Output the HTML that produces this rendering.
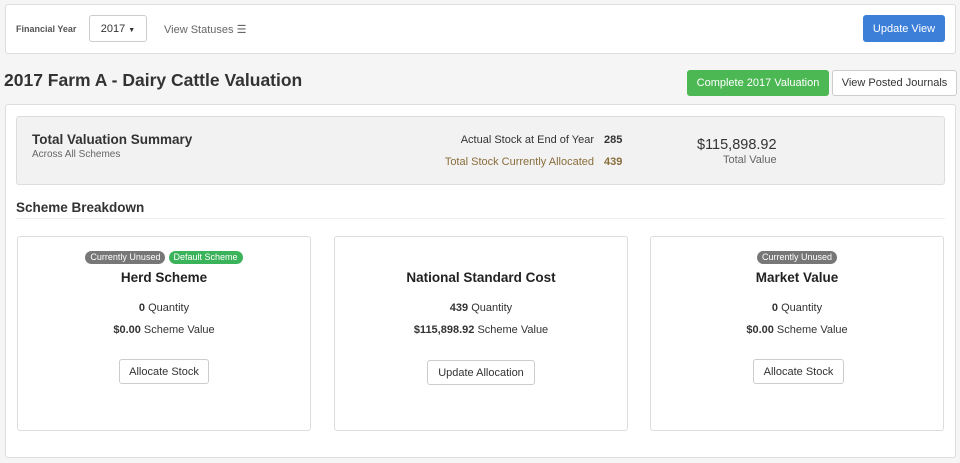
<!DOCTYPE html>
<html><head><style>
*{box-sizing:border-box;margin:0;padding:0}
body{width:960px;height:463px;background:#f5f5f5;font-family:"Liberation Sans",Arial,sans-serif;color:#333;position:relative;overflow:hidden;font-size:11px}
.a{position:absolute}
.panel{background:#fff;border:1px solid #ddd;border-radius:3px}
.btn{position:absolute;border:1px solid #ccc;border-radius:3px;background:#fff;font-size:11px;text-align:center}
.card{position:absolute;top:236px;width:294px;height:195px;border:1px solid #ddd;border-radius:3px;background:#fff;text-align:center}
.card h3{position:absolute;left:0;right:0;top:33px;font-size:13.5px;font-weight:bold;color:#222}
.card .q{position:absolute;left:0;right:0;top:65px}
.card .v{position:absolute;left:0;right:0;top:87px}
.badge{display:inline-block;color:#fff;font-size:9px;border-radius:7px;padding:1px 5px;line-height:11px}
</style></head><body>
<div class="a panel" style="left:5px;top:4px;width:951px;height:50px"></div>
<div class="a" style="left:16px;top:24px;font-size:9px;font-weight:bold;color:#555">Financial Year</div>
<div class="btn" style="left:89px;top:15px;width:58px;height:27px;line-height:27px;font-size:11px">2017 <span style="font-size:7px">▼</span></div>
<div class="a" style="left:164px;top:23px;color:#666">View Statuses <span style="font-size:11px">☰</span></div>
<div class="a" style="left:863px;top:15px;width:82px;height:27px;background:#3c7fd8;border-radius:3px;color:#fff;line-height:28px;text-align:center">Update View</div>
<div class="a" style="left:4px;top:70px;font-size:17.5px;font-weight:bold;color:#333">2017 Farm A - Dairy Cattle Valuation</div>
<div class="a" style="left:687px;top:70px;width:142px;height:26px;background:#4cb854;border-radius:3px;color:#fff;line-height:27px;text-align:center">Complete 2017 Valuation</div>
<div class="btn" style="left:832px;top:70px;width:125px;height:26px;line-height:25px">View Posted Journals</div>
<div class="a panel" style="left:5px;top:104px;width:951px;height:354px"></div>
<div class="a" style="left:16px;top:116px;width:929px;height:69px;background:#f2f2f2;border:1px solid #ddd;border-radius:3px"></div>
<div class="a" style="left:32px;top:132px;font-size:13.5px;font-weight:bold;color:#333">Total Valuation Summary</div>
<div class="a" style="left:32px;top:149px;font-size:10px;color:#666">Across All Schemes</div>
<div class="a" style="left:400px;top:134px;width:194px;text-align:right">Actual Stock at End of Year</div>
<div class="a" style="left:604px;top:134px;font-weight:bold">285</div>
<div class="a" style="left:400px;top:156px;width:194px;text-align:right;color:#8a6d3b">Total Stock Currently Allocated</div>
<div class="a" style="left:604px;top:156px;font-weight:bold;color:#8a6d3b">439</div>
<div class="a" style="left:697px;top:137px;font-size:14.5px">$115,898.92</div>
<div class="a" style="left:723px;top:154px;color:#666">Total Value</div>
<div class="a" style="left:16px;top:200px;font-size:13.5px;font-weight:bold">Scheme Breakdown</div>
<div class="a" style="left:16px;top:218px;width:929px;height:1px;background:#eee"></div>
<div class="card" style="left:17px"><div style="position:absolute;top:14px;left:0;right:0"><span class="badge" style="background:#777">Currently Unused</span> <span class="badge" style="background:#3bb35a">Default Scheme</span></div><h3>Herd Scheme</h3><div class="q"><b>0</b> Quantity</div><div class="v"><b>$0.00</b> Scheme Value</div><div class="btn" style="left:101px;top:122px;width:90px;height:25px;line-height:25px">Allocate Stock</div></div>
<div class="card" style="left:334px"><h3>National Standard Cost</h3><div class="q"><b>439</b> Quantity</div><div class="v"><b>$115,898.92</b> Scheme Value</div><div class="btn" style="left:92px;top:123px;width:108px;height:25px;line-height:25px">Update Allocation</div></div>
<div class="card" style="left:650px"><div style="position:absolute;top:14px;left:0;right:0"><span class="badge" style="background:#777">Currently Unused</span></div><h3>Market Value</h3><div class="q"><b>0</b> Quantity</div><div class="v"><b>$0.00</b> Scheme Value</div><div class="btn" style="left:102px;top:122px;width:91px;height:25px;line-height:25px">Allocate Stock</div></div>
</body></html>
